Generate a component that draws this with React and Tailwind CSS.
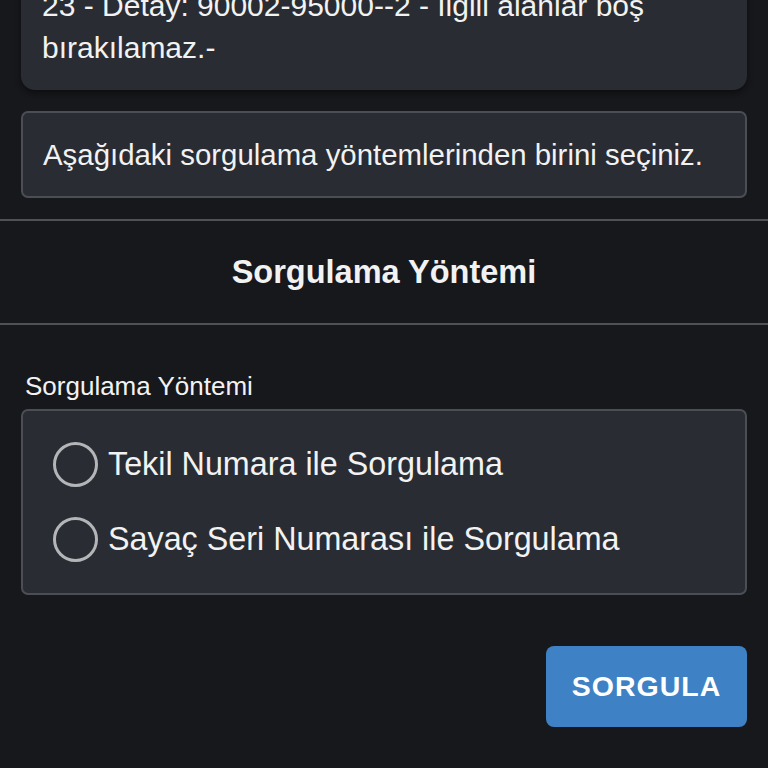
export default function App() {
  return (
    <div className="min-h-[768px] w-full overflow-hidden bg-[#17181c] text-[#f2f2f3] font-['Liberation_Sans',Arial,sans-serif]">
      <div className="px-[21px]">
        <div className="-mt-[36px] rounded-[14px] bg-[#292c32] px-[21px] pt-[21px] pb-[21px] text-[30px] leading-[42px] shadow-[0_3px_6px_rgba(0,0,0,0.45)]">
          23 - Detay: 90002-95000--2 - İlgili alanlar boş bırakılamaz.-
        </div>

        <div className="mt-[21px] rounded-[7px] border-2 border-[#4b4e55] bg-[#292c32] px-[20px] pt-[22px] pb-[21px] text-[29.4px] leading-[40px]">
          Aşağıdaki sorgulama yöntemlerinden birini seçiniz.
        </div>
      </div>

      <div className="mt-[21px] border-y-2 border-[#4f5156]">
        <h2 className="flex h-[102px] items-center justify-center text-[32.5px] font-bold">
          Sorgulama Yöntemi
        </h2>
      </div>

      <div className="px-[21px] pt-[46px]">
        <label className="block px-[4px] text-[26px] leading-[31px]">Sorgulama Yöntemi</label>

        <div className="mt-[7px] rounded-[7px] border-2 border-[#4b4e55] bg-[#292c32] py-[16px] pl-[30px]">
          {["Tekil Numara ile Sorgulama", "Sayaç Seri Numarası ile Sorgulama"].map((t) => (
            <div key={t} className="flex h-[75px] items-center gap-[10px]">
              <span className="h-[45px] w-[45px] shrink-0 rounded-full border-[3px] border-[#b4b5b8]" />
              <span className="text-[32.3px] leading-none">{t}</span>
            </div>
          ))}
        </div>

        <div className="mt-[51px] flex justify-end">
          <button className="flex h-[81px] w-[201px] items-center justify-center rounded-[8px] bg-[#3e82c5] text-[28.5px] font-extrabold tracking-[1px] text-white">
            SORGULA
          </button>
        </div>
      </div>
    </div>
  );
}
